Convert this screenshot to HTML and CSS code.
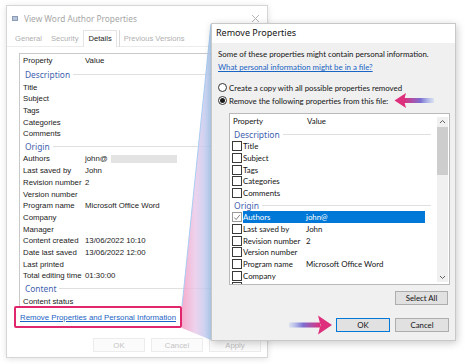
FILE: index.html
```html
<!DOCTYPE html>
<html lang="en">
<head>
    <meta charset="UTF-8" />
    <title>Remove Properties</title>
    <link rel="stylesheet" href="styles.css">
</head>
<body>
    <div class="desk">
        <!-- back window -->
        <div class="window props">
            <div class="titlebar">
                <span class="app-icon"></span>
                <span class="title">View Word Author Properties</span>
                <svg class="close" width="9" height="9" viewBox="0 0 9 9"><path d="M1 1L8 8M8 1L1 8" stroke="#b5b5b5" stroke-width="1" fill="none"/></svg>
            </div>
            <div class="tabs">
                <span class="tab">General</span>
                <span class="tab">Security</span>
                <span class="tab active">Details</span>
                <span class="tab">Previous Versions</span>
            </div>
            <div class="panel">
                <div class="details">
                    <div class="row head"><span class="key">Property</span><span>Value</span></div>
                    <div class="group"><span>Description</span></div>
                    <div class="row"><span class="key">Title</span></div>
                    <div class="row"><span class="key">Subject</span></div>
                    <div class="row"><span class="key">Tags</span></div>
                    <div class="row"><span class="key">Categories</span></div>
                    <div class="row"><span class="key">Comments</span></div>
                    <div class="group"><span>Origin</span></div>
                    <div class="row"><span class="key">Authors</span><span>john@</span><span class="redact"></span></div>
                    <div class="row"><span class="key">Last saved by</span><span>John</span></div>
                    <div class="row"><span class="key">Revision number</span><span>2</span></div>
                    <div class="row"><span class="key">Version number</span></div>
                    <div class="row"><span class="key">Program name</span><span>Microsoft Office Word</span></div>
                    <div class="row"><span class="key">Company</span></div>
                    <div class="row"><span class="key">Manager</span></div>
                    <div class="row"><span class="key">Content created</span><span>13/06/2022 10:10</span></div>
                    <div class="row"><span class="key">Date last saved</span><span>13/06/2022 12:00</span></div>
                    <div class="row"><span class="key">Last printed</span></div>
                    <div class="row"><span class="key">Total editing time</span><span>01:30:00</span></div>
                    <div class="group"><span>Content</span></div>
                    <div class="row"><span class="key">Content status</span></div>
                </div>
                <div class="remove-link"><a href="#">Remove Properties and Personal Information</a></div>
            </div>
            <div class="actions">
                <button class="btn">OK</button>
                <button class="btn">Cancel</button>
                <button class="btn">Apply</button>
            </div>
        </div>

        <svg class="beam" width="474" height="364" viewBox="0 0 474 364">
            <defs>
                <linearGradient id="beamFill" x1="182" y1="0" x2="211" y2="0" gradientUnits="userSpaceOnUse">
                    <stop offset="0" stop-color="#f59cc2" stop-opacity="0.85"/>
                    <stop offset="0.45" stop-color="#e7c3e6" stop-opacity="0.75"/>
                    <stop offset="1" stop-color="#a9cdf3" stop-opacity="0.85"/>
                </linearGradient>
            </defs>
            <polygon points="182,306 211,24 211,340 182,328" fill="url(#beamFill)"/>
            <line x1="182" y1="306" x2="211" y2="24" stroke="#a9cdf3" stroke-width="1"/>
        </svg>

        <!-- front dialog -->
        <div class="window remove">
            <div class="dlg-title">Remove Properties</div>
            <div class="dlg-body">
                <p class="line">Some of these properties might contain personal information.</p>
                <p class="line"><a href="#">What personal information might be in a file?</a></p>
                <div class="radios">
                    <label class="radio"><span class="dot"></span>Create a copy with all possible properties removed</label>
                    <label class="radio"><span class="dot on"></span>Remove the following properties from this file:</label>
                </div>
                <div class="picker">
                    <div class="picker-list">
                        <div class="prow head"><span class="pkey">Property</span><span>Value</span></div>
                        <div class="group"><span>Description</span></div>
                        <div class="prow"><span class="box"></span><span class="pkey">Title</span></div>
                        <div class="prow"><span class="box"></span><span class="pkey">Subject</span></div>
                        <div class="prow"><span class="box"></span><span class="pkey">Tags</span></div>
                        <div class="prow"><span class="box"></span><span class="pkey">Categories</span></div>
                        <div class="prow"><span class="box"></span><span class="pkey">Comments</span></div>
                        <div class="group"><span>Origin</span></div>
                        <div class="prow"><span class="box checked"><svg width="9" height="9" viewBox="0 0 9 9"><path d="M1.5 4.5L3.5 6.8L7.8 1.5" stroke="#777" stroke-width="1" fill="none"/></svg></span><span class="sel"><span class="pkey">Authors</span><span>john@</span></span></div>
                        <div class="prow"><span class="box"></span><span class="pkey">Last saved by</span><span>John</span></div>
                        <div class="prow"><span class="box"></span><span class="pkey">Revision number</span><span>2</span></div>
                        <div class="prow"><span class="box"></span><span class="pkey">Version number</span></div>
                        <div class="prow"><span class="box"></span><span class="pkey">Program name</span><span>Microsoft Office Word</span></div>
                        <div class="prow"><span class="box"></span><span class="pkey">Company</span></div>
                        <div class="prow"><span class="box"></span><span class="pkey">Manager</span></div>
                    </div>
                    <div class="scrollbar">
                        <svg width="11" height="10" viewBox="0 0 11 10"><path d="M3 6L5.5 3.5L8 6" stroke="#606060" stroke-width="1" fill="none"/></svg>
                        <div class="thumb"></div>
                        <div class="track"></div>
                        <svg width="11" height="10" viewBox="0 0 11 10"><path d="M3 4L5.5 6.5L8 4" stroke="#606060" stroke-width="1" fill="none"/></svg>
                    </div>
                </div>
                <div class="select-all"><button class="btn">Select All</button></div>
                <div class="dlg-actions">
                    <button class="btn default">OK</button>
                    <button class="btn">Cancel</button>
                </div>
            </div>
        </div>

        <svg class="arrows" width="474" height="364" viewBox="0 0 474 364">
            <defs>
                <linearGradient id="tailLeft" x1="404" y1="0" x2="434" y2="0" gradientUnits="userSpaceOnUse">
                    <stop offset="0" stop-color="#dc2f7c"/>
                    <stop offset="0.55" stop-color="#7d6fd2"/>
                    <stop offset="1" stop-color="#8aa8ec" stop-opacity="0.2"/>
                </linearGradient>
                <linearGradient id="tailRight" x1="289" y1="0" x2="320" y2="0" gradientUnits="userSpaceOnUse">
                    <stop offset="0" stop-color="#8aa8ec" stop-opacity="0.2"/>
                    <stop offset="0.45" stop-color="#7d6fd2"/>
                    <stop offset="1" stop-color="#dc2f7c"/>
                </linearGradient>
            </defs>
            <rect x="403" y="98" width="31" height="5" fill="url(#tailLeft)"/>
            <path d="M394.5 100.5L406 93L404 100.5L406 108Z" fill="#dd2f7b"/>
            <rect x="289" y="322.5" width="31" height="5" fill="url(#tailRight)"/>
            <path d="M332 325L318 315.5L320.5 325L318 334.5Z" fill="#dd2f7b"/>
        </svg>
    </div>
</body>
</html>
```

FILE: styles.css
```css
* {
    box-sizing: border-box;
    margin: 0;
    padding: 0;
}

body {
    background: #fff;
    font-family: 'Lato', 'Noto Sans', sans-serif;
    font-size: 7.85px;
    color: #141414;
}

.desk {
    position: relative;
    width: 474px;
    height: 364px;
    overflow: hidden;
}

.window {
    position: absolute;
    border: 1px solid #d6d6d6;
}

a {
    color: #1a64c4;
}

.btn {
    font-family: 'Lato', 'Noto Sans', sans-serif;
    font-size: 7.85px;
    height: 14px;
    background: #e1e1e1;
    border: 1px solid #adadad;
    color: #141414;
}

/* back window */
.props {
    left: 6px;
    top: 5px;
    width: 262px;
    height: 353px;
    background: #fff;
    box-shadow: 0 1px 6px rgba(0, 0, 0, 0.12);
    font-family: 'Liberation Sans', sans-serif;
    font-size: 7.8px;
    color: #222;
}

.titlebar {
    height: 24px;
    display: flex;
    align-items: center;
    padding-left: 5px;
    padding-right: 7px;
}

.app-icon {
    width: 6px;
    height: 5px;
    background: #b8c4d8;
    border: 1px solid #8c9bb6;
    margin-right: 6px;
}

.title {
    flex: 1;
    font-family: 'Noto Sans', sans-serif;
    font-size: 8.3px;
    color: #a7a7a7;
}

.tabs {
    display: flex;
    height: 17px;
    align-items: center;
    padding-left: 4px;
    border-bottom: 1px solid #ececec;
    font-size: 7.6px;
}

.tab {
    color: #b0b0b0;
    padding: 0 4px;
    height: 17px;
    line-height: 17px;
    margin-right: 1px;
}

.tab.active {
    color: #1c1c1c;
    padding: 0 4px;
    border: 1px solid #e4e4e4;
    border-bottom: none;
    background: #fff;
    margin-bottom: -1px;
    line-height: 15px;
}

.tab.active + .tab {
    border-left: 1px solid #dadada;
    margin-left: 1px;
}

.panel {
    padding: 6px 0 0 7px;
}

.details {
    margin-left: 5px;
    width: 235px;
    height: 253px;
    overflow: hidden;
    border: 1px solid #c9c9c9;
    border-bottom: none;
    padding-left: 3px;
}

.row {
    display: flex;
    height: 11.7px;
    line-height: 11.7px;
    white-space: nowrap;
}

.row.head {
    height: 14px;
    line-height: 14px;
}

.key {
    width: 62px;
    flex-shrink: 0;
}

.redact {
    width: 66px;
    height: 8px;
    margin: 2px 0 0 3px;
    background: #e3e3e3;
}

.group {
    display: flex;
    align-items: center;
    height: 13.5px;
    padding-left: 2px;
    color: #3f5fae;
    font-family: 'Noto Sans', sans-serif;
    font-size: 8.4px;
}

.group::after {
    content: "";
    flex: 1;
    height: 1px;
    background: #e0e0e0;
    margin-left: 3px;
}

.remove-link {
    width: 168px;
    height: 22px;
    border: 2px solid #e0266c;
    border-radius: 2px;
    display: flex;
    align-items: center;
    padding-left: 4px;
    font-size: 7.8px;
}

.actions {
    display: flex;
    justify-content: flex-end;
    gap: 6px;
    padding: 10px 6px 0 0;
}

.actions .btn {
    width: 52px;
    background: #fbfbfb;
    border-color: #ececec;
    color: #c4c4c4;
    font-family: 'Liberation Sans', sans-serif;
    font-size: 7.8px;
}

.beam {
    position: absolute;
    left: 0;
    top: 0;
}

/* front dialog */
.remove {
    left: 211px;
    top: 23px;
    width: 245px;
    height: 318px;
    background: #f0f0f0;
    border-color: #c8c8c8;
    box-shadow: 1px 2px 8px rgba(0, 0, 0, 0.22);
}

.dlg-title {
    height: 19px;
    line-height: 17px;
    padding-left: 4px;
    background: #fff;
    font-family: 'Noto Sans', sans-serif;
    font-size: 9px;
}

.dlg-body {
    padding: 5px 6px 0 6px;
}

.line {
    height: 13px;
    line-height: 13px;
    white-space: nowrap;
}

.radios {
    margin-top: 7px;
}

.radio {
    display: flex;
    align-items: center;
    height: 13px;
    white-space: nowrap;
}

.dot {
    width: 9px;
    height: 9px;
    border: 1px solid #333;
    border-radius: 50%;
    margin-right: 2px;
    background: #fff;
    display: flex;
    align-items: center;
    justify-content: center;
}

.dot.on::after {
    content: "";
    width: 5px;
    height: 5px;
    border-radius: 50%;
    background: #1a1a1a;
}

.picker {
    margin: 6px 0 0 11px;
    width: 221px;
    height: 172px;
    background: #fff;
    border: 1px solid #b9b9b9;
    display: flex;
    padding: 0 1px 0 2px;
}

.picker-list {
    flex: 1;
    overflow: hidden;
    padding-right: 2px;
}

.prow {
    display: flex;
    align-items: center;
    height: 11.7px;
    white-space: nowrap;
}

.prow.head {
    height: 14px;
    padding-left: 1px;
}

.pkey {
    width: 63px;
    flex-shrink: 0;
}

.prow.head .pkey {
    width: 74px;
}

.box {
    width: 10px;
    height: 10px;
    border: 1px solid #3a3a3a;
    margin-right: 1px;
    flex-shrink: 0;
}

.box.checked {
    border-color: #9a9a9a;
    display: flex;
}

.sel {
    display: flex;
    align-items: center;
    background: #0078d7;
    color: #fff;
    width: 182px;
    height: 11.7px;
}

.picker .group {
    font-size: 8.5px;
    height: 12.5px;
    margin-right: 4px;
}

.scrollbar {
    width: 11px;
    display: flex;
    flex-direction: column;
    background: #f0f0f0;
    margin: 3px 0 2px;
}

.thumb {
    height: 48px;
    background: #cdcdcd;
}

.track {
    flex: 1;
}

.select-all {
    display: flex;
    justify-content: flex-end;
    margin-top: 6px;
    padding-right: 1px;
}

.select-all .btn {
    width: 53px;
}

.dlg-actions {
    display: flex;
    justify-content: flex-end;
    gap: 5px;
    margin-top: 13px;
}

.dlg-actions .btn {
    width: 54px;
}

.btn.default {
    border-color: #0078d7;
}

.arrows {
    position: absolute;
    left: 0;
    top: 0;
}
```
